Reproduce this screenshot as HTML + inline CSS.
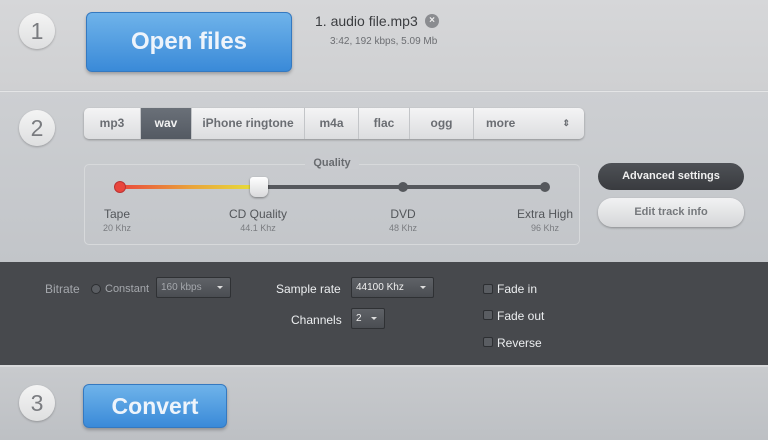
<!DOCTYPE html><html><head><style>
*{margin:0;padding:0;box-sizing:border-box}
body{width:768px;height:440px;overflow:hidden;font-family:"Liberation Sans",sans-serif;background:#c9cbce;position:relative}
.a{position:absolute}
.sec1{left:0;top:0;width:768px;height:90px;background:linear-gradient(#d6d7d9,#cfd0d2)}
.sec2{left:0;top:91px;width:768px;height:171px;background:linear-gradient(#cdcfd2,#c2c5c9);border-top:1px solid #e4e5e6}
.dark{left:0;top:262px;width:768px;height:105px;background:#47494d;border-bottom:2px solid #d8d9db}
.sec3{left:0;top:369px;width:768px;height:71px;background:linear-gradient(#c8cacd,#bdc0c4)}
.num{width:36px;height:36px;border-radius:50%;background:linear-gradient(#f4f4f4,#dedfe0);box-shadow:0 1px 2px rgba(0,0,0,.25);color:#7a7c80;font-size:23px;text-align:center;line-height:36px}
.btn{border-radius:6px;background:linear-gradient(#6fb3ea,#3a8ad8);border:1px solid #3579c0;color:#eef4fb;font-weight:bold;text-align:center;box-shadow:0 2px 3px rgba(0,0,0,.25)}
.tabs{left:84px;top:108px;width:500px;height:31px;border-radius:5px;background:linear-gradient(#f4f4f5,#dcdddf);box-shadow:0 1px 2px rgba(0,0,0,.3);display:flex;overflow:hidden}
.tabs div{height:31px;line-height:31px;text-align:center;font-size:12px;font-weight:bold;color:#6a6d72;border-right:1px solid #c3c5c8}
.lbl{font-size:12px;color:#53565a;text-align:center;width:100px}
.sub{font-size:9px;color:#7a7c80;text-align:center;width:100px}
.dl{font-size:12px;color:#eceef0}
.sel{height:21px;border-radius:2px;background:linear-gradient(#5f6267,#4a4d52);border:1px solid #2f3134;font-size:10px;color:#f0f0f0;line-height:19px;padding-left:4px}
.sel:after{content:"";position:absolute;right:7px;top:8px;border:3px solid transparent;border-top:3px solid #ddd}
.cb{width:10px;height:10px;background:#5a5d62;border:1px solid #2d2f32;border-radius:2px}
</style></head><body>
<div class="a sec1"></div><div class="a sec2"></div><div class="a dark"></div><div class="a sec3"></div>
<div class="a num" style="left:19px;top:13px">1</div>
<div class="a num" style="left:19px;top:110px">2</div>
<div class="a num" style="left:19px;top:385px">3</div>
<div class="a btn" style="left:86px;top:12px;width:206px;height:60px;font-size:24px;line-height:58px">Open files</div>
<div class="a" style="left:315px;top:13px;font-size:14px;color:#3b3d40">1. audio file.mp3</div>
<div class="a" style="left:425px;top:14px;width:14px;height:14px;border-radius:50%;background:#8a8c90;color:#eee;font-size:10px;text-align:center;line-height:14px;font-weight:bold">×</div>
<div class="a" style="left:330px;top:36px;font-size:10px;color:#6c6e72">3:42, 192 kbps, 5.09 Mb</div>
<div class="a tabs"><div style="width:57px">mp3</div><div style="width:51px;background:linear-gradient(#6a7078,#545a63);color:#f2f2f2">wav</div><div style="width:113px">iPhone ringtone</div><div style="width:54px">m4a</div><div style="width:51px">flac</div><div style="width:64px">ogg</div><div style="width:110px;border:none;text-align:left;padding-left:12px;position:relative">more<span style="position:absolute;right:14px;top:0;font-size:9px">⇕</span></div></div>
<div class="a" style="left:84px;top:164px;width:496px;height:81px;border:1px solid #d7d9db;border-radius:5px"></div>
<div class="a" style="left:305px;top:157px;width:54px;background:#c9cbcf;text-align:center;font-size:11px;font-weight:bold;color:#686b6f">Quality</div>
<div class="a" style="left:120px;top:185px;width:425px;height:4px;background:#55585c;border-radius:2px"></div>
<div class="a" style="left:120px;top:185px;width:140px;height:4px;background:linear-gradient(90deg,#e9483c,#e9a23a,#e6e33a)"></div>
<div class="a" style="left:114px;top:181px;width:12px;height:12px;border-radius:50%;background:#e9463d;border:1px solid #b33"></div>
<div class="a" style="left:398px;top:182px;width:10px;height:10px;border-radius:50%;background:#55585c"></div>
<div class="a" style="left:540px;top:182px;width:10px;height:10px;border-radius:50%;background:#55585c"></div>
<div class="a" style="left:250px;top:177px;width:18px;height:20px;border-radius:3px 3px 6px 6px;background:linear-gradient(#fff,#d9dadc);box-shadow:0 1px 2px rgba(0,0,0,.4)"></div>
<div class="a lbl" style="left:67px;top:207px">Tape</div><div class="a sub" style="left:67px;top:223px">20 Khz</div>
<div class="a lbl" style="left:208px;top:207px">CD Quality</div><div class="a sub" style="left:208px;top:223px">44.1 Khz</div>
<div class="a lbl" style="left:353px;top:207px">DVD</div><div class="a sub" style="left:353px;top:223px">48 Khz</div>
<div class="a lbl" style="left:495px;top:207px">Extra High</div><div class="a sub" style="left:495px;top:223px">96 Khz</div>
<div class="a" style="left:598px;top:163px;width:146px;height:27px;border-radius:14px;background:linear-gradient(#4e5156,#393b3f);color:#f0f0f0;font-size:11px;font-weight:bold;text-align:center;line-height:27px">Advanced settings</div>
<div class="a" style="left:598px;top:198px;width:146px;height:29px;border-radius:14px;background:linear-gradient(#f2f2f3,#d5d6d8);box-shadow:0 1px 2px rgba(0,0,0,.3);color:#75787c;font-size:11px;font-weight:bold;text-align:center;line-height:29px">Edit track info</div>
<div class="a dl" style="left:45px;top:282px;color:#a5a8ad">Bitrate</div>
<div class="a" style="left:91px;top:284px;width:10px;height:10px;border-radius:50%;background:#5a5d62;border:1px solid #2d2f32"></div>
<div class="a dl" style="left:105px;top:283px;font-size:11px;color:#a5a8ad">Constant</div>
<div class="a sel" style="left:156px;top:277px;width:75px;color:#a5a8ad">160 kbps</div>
<div class="a dl" style="left:276px;top:282px">Sample rate</div>
<div class="a sel" style="left:351px;top:277px;width:83px">44100 Khz</div>
<div class="a dl" style="left:291px;top:313px">Channels</div>
<div class="a sel" style="left:351px;top:308px;width:34px">2</div>
<div class="a cb" style="left:483px;top:284px"></div><div class="a dl" style="left:497px;top:282px">Fade in</div>
<div class="a cb" style="left:483px;top:310px"></div><div class="a dl" style="left:497px;top:309px">Fade out</div>
<div class="a cb" style="left:483px;top:337px"></div><div class="a dl" style="left:497px;top:336px">Reverse</div>
<div class="a btn" style="left:83px;top:384px;width:144px;height:44px;font-size:23px;line-height:42px">Convert</div>
</body></html>
